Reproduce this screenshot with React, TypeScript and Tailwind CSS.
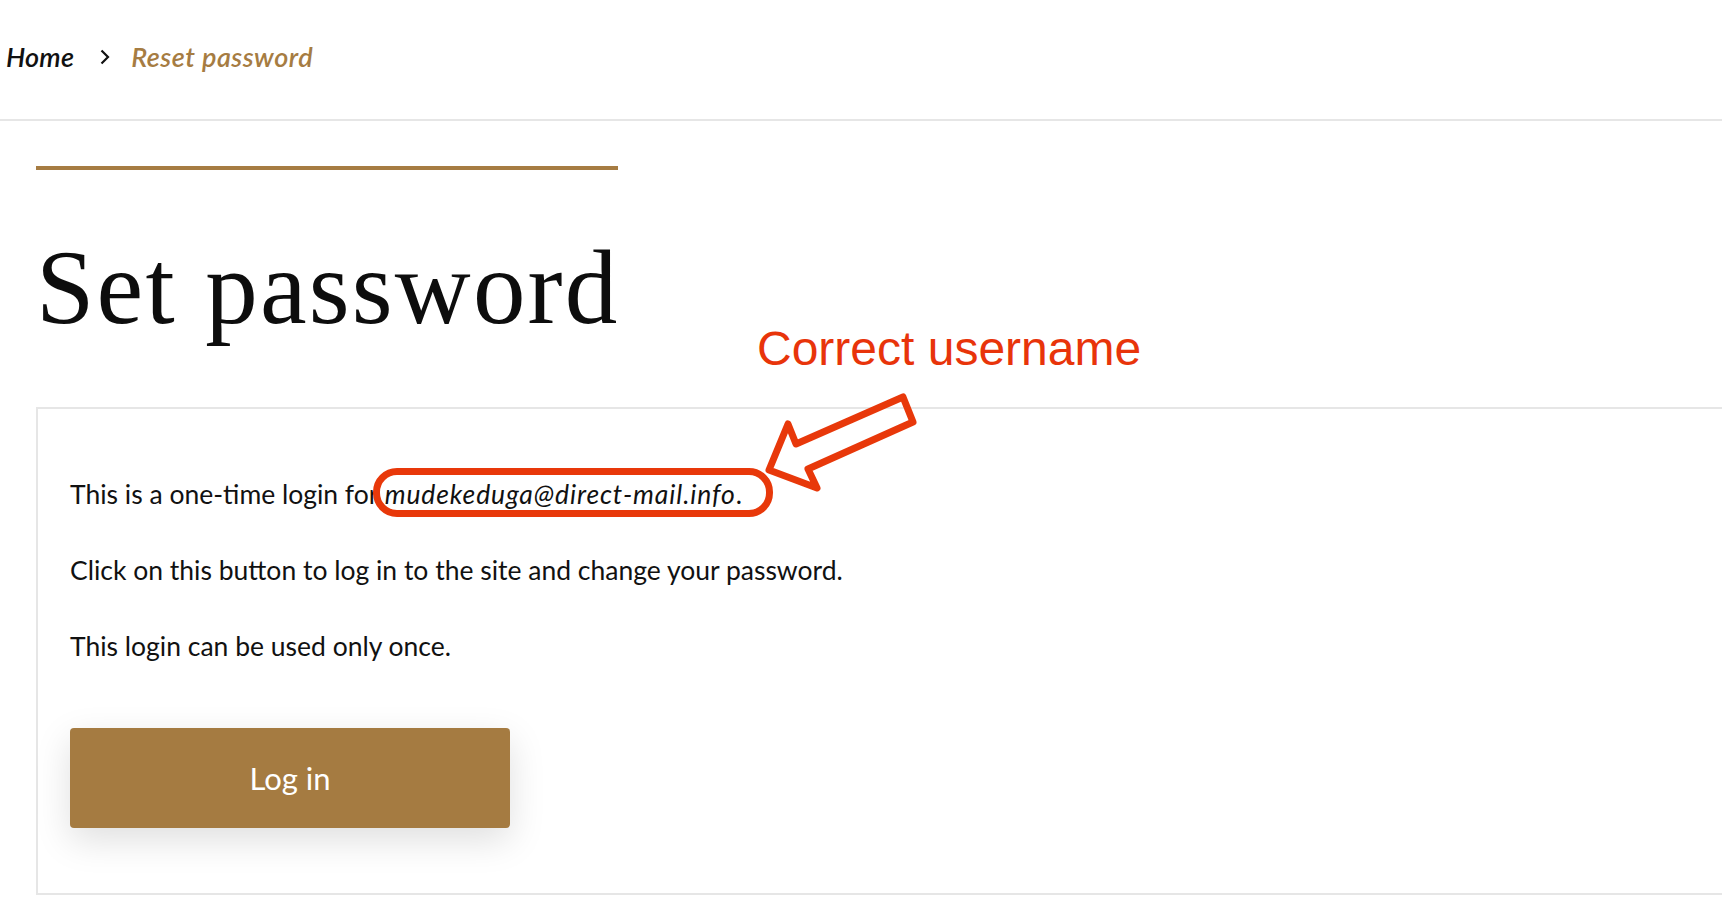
import React from "react";

const sans = { fontFamily: '"Source Sans Pro", Lato, "Noto Sans", sans-serif' };

export default function App() {
  return (
    <div className="relative w-full h-[906px] overflow-hidden bg-white text-[#111]" style={sans}>
      <header className="h-[121px] border-b-2 border-[#e6e6e6] pt-[37px] pl-[6px]">
        <nav className="flex items-center text-[27px] leading-[40px] italic font-semibold">
          <span className="text-[#111] tracking-[0.2px]">Home</span>
          <svg className="ml-[26px] mr-[21px]" width="10" height="16" viewBox="0 0 10 16">
            <polyline points="1.5,1.5 8,8 1.5,14.5" fill="none" stroke="#111" strokeWidth="2.2" />
          </svg>
          <span className="text-[#a67c42] tracking-[0.5px]">Reset password</span>
        </nav>
      </header>

      <main className="pl-[36px]">
        <div className="mt-[45px] w-[582px] h-[4px] bg-[#a67c42]" />
        <h1
          className="mt-[65px] mb-[67px] text-[105px] leading-none text-[#0d0d0d] tracking-[2.2px]"
          style={{ fontFamily: '"Liberation Serif", Georgia, serif' }}
        >
          Set password
        </h1>

        <section className="mr-[-40px] border-2 border-[#e6e6e6] pt-[66px] pb-[65px] pl-[32px]">
          <div className="flex flex-col gap-[38px] text-[26.5px] leading-[38px]">
            <p>
              This is a one-time login for{" "}
              <em className="tracking-[0.9px]">mudekeduga@direct-mail.info</em>.
            </p>
            <p>Click on this button to log in to the site and change your password.</p>
            <p>This login can be used only once.</p>
          </div>
          <button className="mt-[63px] w-[440px] h-[100px] rounded-[4px] bg-[#a57b41] text-white text-[31px] shadow-[0_12px_36px_rgba(0,0,0,0.13)]">
            Log in
          </button>
        </section>
      </main>

      {/* annotation overlay */}
      <div
        className="absolute left-[757px] top-[321px] text-[48px] leading-[56px] text-[#e8340a] whitespace-nowrap"
        style={{ fontFamily: '"Liberation Sans", Arial, sans-serif' }}
      >
        Correct username
      </div>
      <div className="absolute left-[373px] top-[468px] w-[400px] h-[49px] rounded-[24px] border-[7px] border-[#e8380a] pointer-events-none" />
      <svg className="absolute left-0 top-0 pointer-events-none" width="1722" height="906" viewBox="0 0 1722 906">
        <polygon
          points="769,470 788,424 796,444 903,397 913,422 808,469 817,488"
          fill="none"
          stroke="#e8380a"
          strokeWidth="7"
          strokeLinejoin="round"
        />
      </svg>
    </div>
  );
}
